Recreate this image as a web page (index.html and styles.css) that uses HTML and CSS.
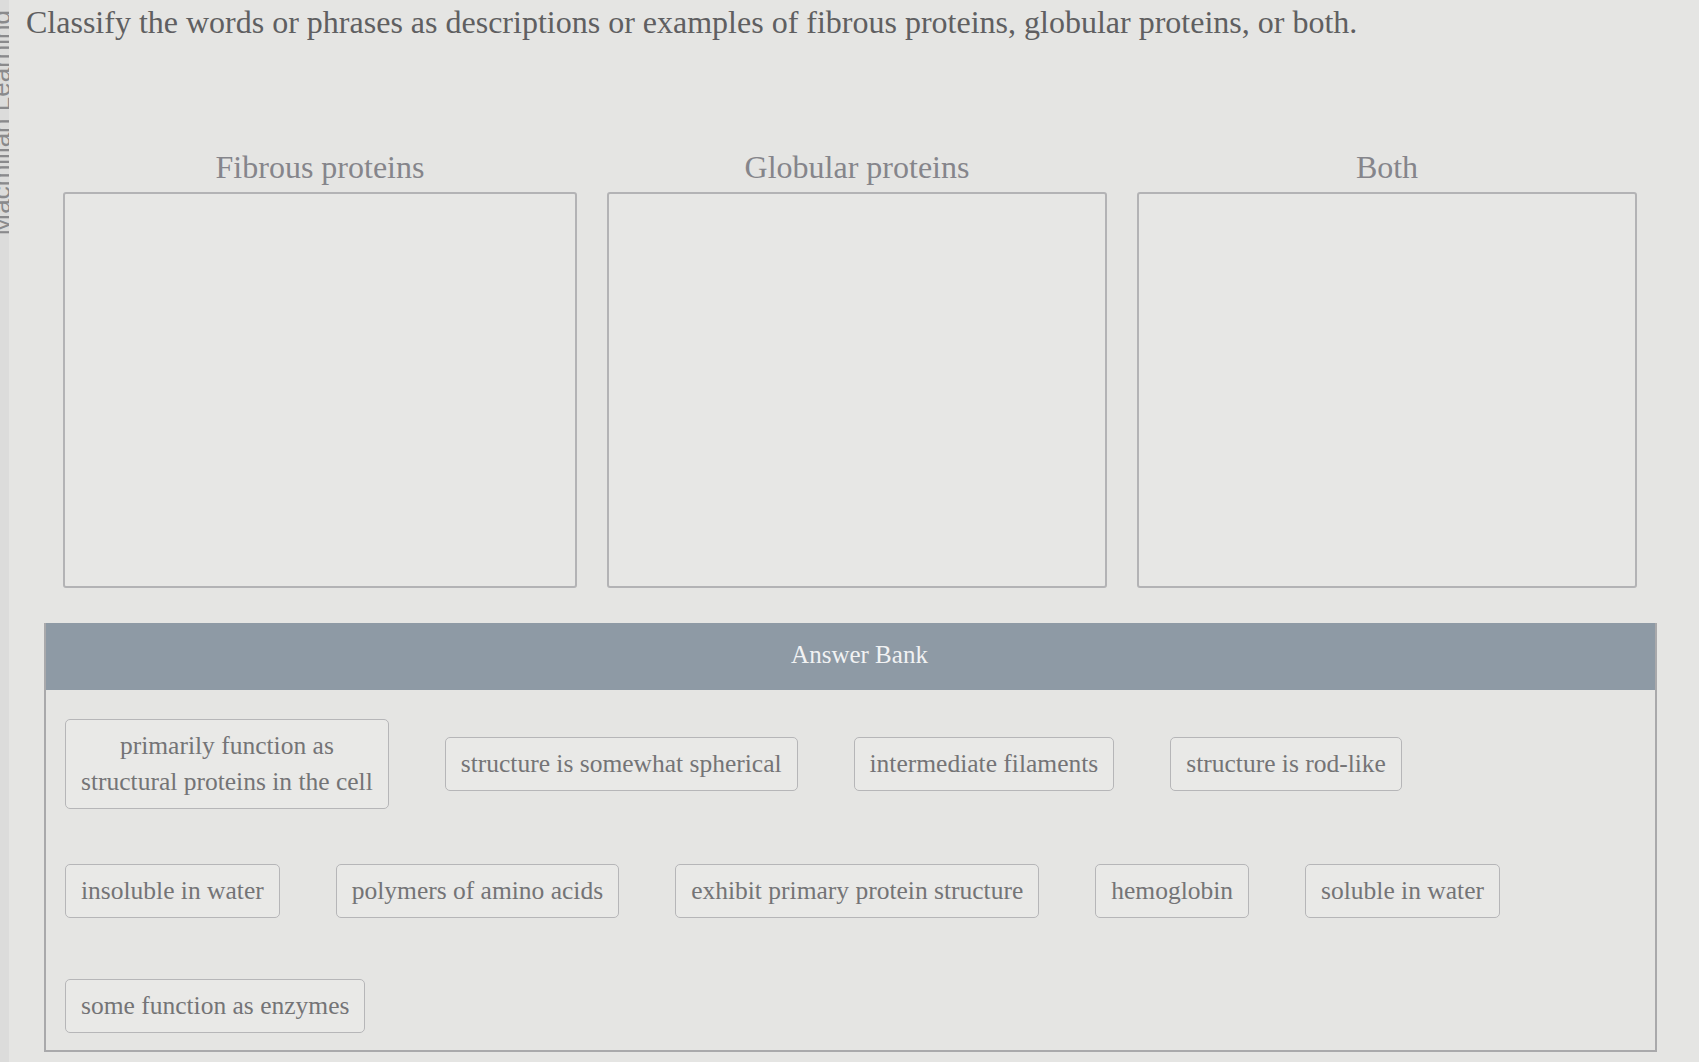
FILE: index.html
```html
<!DOCTYPE html>
<html lang="en">
<head>
    <meta charset="UTF-8">
    <title>Classify proteins</title>
    <link rel="stylesheet" href="styles.css">
</head>
<body>
    <div class="app">
        <div class="rail"><span class="rail-text">Macmillan Learning</span></div>

        <div class="main">
            <p class="prompt">Classify the words or phrases as descriptions or examples of fibrous proteins, globular proteins, or both.</p>

            <div class="bins">
                <div class="bin">
                    <h2 class="bin-title">Fibrous proteins</h2>
                    <div class="drop-zone"></div>
                </div>
                <div class="bin">
                    <h2 class="bin-title">Globular proteins</h2>
                    <div class="drop-zone"></div>
                </div>
                <div class="bin">
                    <h2 class="bin-title">Both</h2>
                    <div class="drop-zone"></div>
                </div>
            </div>

            <div class="answer-bank">
                <div class="bank-header">Answer Bank</div>
                <div class="bank-body">
                    <div class="chip-row">
                        <div class="chip">primarily function as<br>structural proteins in the cell</div>
                        <div class="chip">structure is somewhat spherical</div>
                        <div class="chip">intermediate filaments</div>
                        <div class="chip">structure is rod-like</div>
                    </div>
                    <div class="chip-row">
                        <div class="chip">insoluble in water</div>
                        <div class="chip">polymers of amino acids</div>
                        <div class="chip">exhibit primary protein structure</div>
                        <div class="chip">hemoglobin</div>
                        <div class="chip">soluble in water</div>
                    </div>
                    <div class="chip-row last-row">
                        <div class="chip">some function as enzymes</div>
                    </div>
                </div>
            </div>
        </div>
    </div>
</body>
</html>
```

FILE: styles.css
```css
html, body {
    margin: 0;
    padding: 0;
    height: 100%;
    overflow: hidden;
}

body {
    font-family: "Liberation Serif", "Times New Roman", serif;
    background-color: #e5e5e3;
    color: #6c6c6c;
}

.app {
    display: flex;
    min-height: 100%;
}

/* clipped sidebar on the far left */
.rail {
    width: 9px;
    flex-shrink: 0;
    overflow: hidden;
    background: #dcdcdb;
}

.rail-text {
    display: block;
    writing-mode: vertical-rl;
    transform: rotate(180deg);
    font-family: "Liberation Sans", Arial, sans-serif;
    font-size: 26px;
    line-height: 26px;
    color: #8a8a8c;
    margin-left: -12px;
    padding-bottom: 10px;
    white-space: nowrap;
}

.main {
    flex: 1;
    padding-left: 17px;
    padding-right: 42px;
}

.prompt {
    margin: 0;
    padding-top: 5px;
    font-size: 32px;
    line-height: 34px;
    color: #5f5f61;
}

/* Drop bins */
.bins {
    display: grid;
    grid-template-columns: 514px 500px 500px;
    column-gap: 30px;
    margin: 111px 0 0 37px;
}

.bin-title {
    margin: 0 0 8px;
    font-size: 32px;
    font-weight: normal;
    line-height: 34px;
    text-align: center;
    color: #85858b;
}

.drop-zone {
    height: 392px;
    border: 2px solid #b3b3b5;
    border-radius: 3px;
    background: #e7e7e5;
}

/* Answer bank */
.answer-bank {
    margin: 35px 0 0 18px;
    border: 2px solid #a9a9ab;
    border-top: none;
    height: 427px;
}

.bank-header {
    height: 67px;
    line-height: 64px;
    padding-left: 18px;
    background: #8e9aa5;
    color: #f1f2f3;
    font-size: 25px;
    text-align: center;
}

.bank-body {
    padding: 29px 19px 0;
    display: flex;
    flex-direction: column;
    row-gap: 55px;
}

.last-row {
    margin-top: 6px;
}

.chip-row {
    display: flex;
    align-items: center;
    column-gap: 56px;
}

.chip {
    padding: 8px 15px;
    font-size: 25.5px;
    line-height: 36px;
    text-align: center;
    color: #747476;
    background: #e9e9e7;
    border: 1.5px solid #b6b6b8;
    border-radius: 5px;
    white-space: nowrap;
}
```
